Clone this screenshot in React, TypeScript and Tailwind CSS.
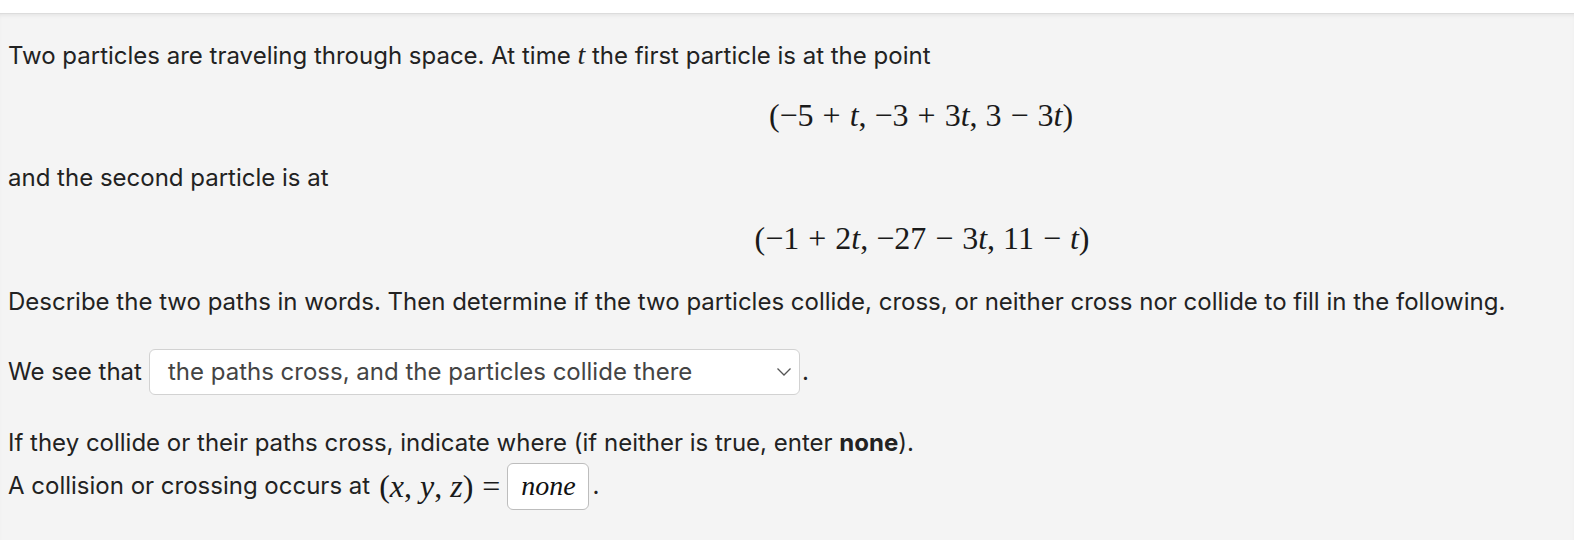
import React from "react";

const serif = "font-['Liberation_Serif',serif]";

const Op = ({ c }: { c: string }) => <span className="mx-[9px]">{c}</span>;
const Cm = () => <span className="mr-[8px]">,</span>;

const mathCls = `${serif} text-[32px] text-[#1a1a1a]`;

export default function App() {
  return (
    <div className="min-h-[540px] w-[1574px] bg-white font-['Inter',sans-serif] text-[24px] text-[#222]">
      <div className="h-[13px] bg-white" />
      <div className="min-h-[527px] border-t border-[#dcdcdc] bg-[#f4f4f4] pl-[8px] shadow-[inset_0_3px_4px_-2px_rgba(0,0,0,0.08)]">
        <p className="pt-[26px] leading-[30px]">
          Two particles are traveling through space. At time{" "}
          <i className={`${serif} text-[28px]`}>t</i> the first particle is at
          the point
        </p>

        <div className={`mt-[26px] pl-[260px] text-center leading-[36px] ${mathCls}`}>
          (−5<Op c="+" />
          <i>t</i>
          <Cm />−3<Op c="+" />3<i>t</i>
          <Cm />3<Op c="−" />3<i>t</i>)
        </div>

        <p className="mt-[30px] leading-[30px]">and the second particle is at</p>

        <div className={`mt-[27px] pl-[262px] text-center leading-[36px] ${mathCls}`}>
          (−1<Op c="+" />2<i>t</i>
          <Cm />−27<Op c="−" />3<i>t</i>
          <Cm />11<Op c="−" />
          <i>t</i>)
        </div>

        <p className="mt-[31px] leading-[30px]">
          Describe the two paths in words. Then determine if the two particles
          collide, cross, or neither cross nor collide to fill in the
          following.
        </p>

        <div className="mt-[32px] flex items-center">
          <span>We see that</span>
          <div className="ml-[7px] flex h-[46px] w-[651px] items-center justify-between rounded-[6px] border border-[#d2d2d2] bg-white pl-[18px] pr-[7px] text-[#444]">
            <span>the paths cross, and the particles collide there</span>
            <svg width="16" height="10" viewBox="0 0 16 10" fill="none">
              <path d="M1.5 1.5l6.5 6.5 6.5-6.5" stroke="#555" strokeWidth="1.3" />
            </svg>
          </div>
          <span className="ml-[2px]">.</span>
        </div>

        <p className="mt-[33px] leading-[30px]">
          If they collide or their paths cross, indicate where (if neither is
          true, enter <b>none</b>).
        </p>

        <div className="mt-[4px] flex items-center">
          <span>A collision or crossing occurs at</span>
          <span className={`ml-[9px] ${mathCls}`}>
            (<i>x</i>
            <Cm />
            <i>y</i>
            <Cm />
            <i>z</i>)<span className="ml-[9px]">=</span>
          </span>
          <div className="ml-[7px] flex h-[47px] w-[82px] items-center justify-center rounded-[6px] border border-[#bdbdbd] bg-white">
            <i className={`${serif} text-[28px] text-[#111]`}>none</i>
          </div>
          <span className="ml-[3px]">.</span>
        </div>
      </div>
    </div>
  );
}
